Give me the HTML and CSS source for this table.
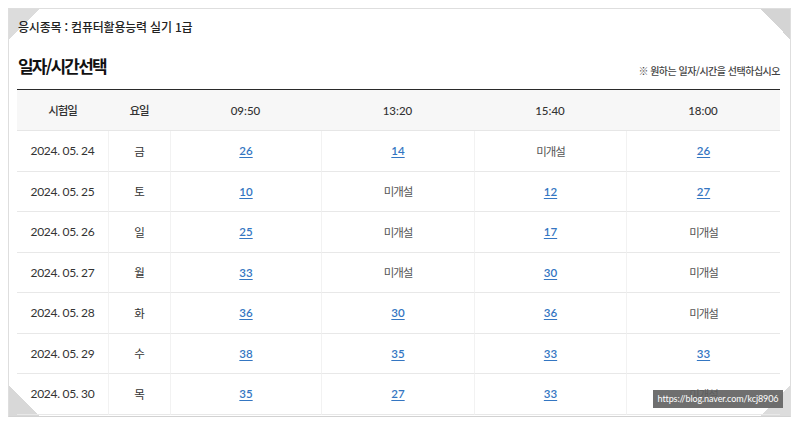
FILE: index.html
```html
<!DOCTYPE html>
<html lang="ko">
<head>
<meta charset="utf-8">
<title>일자/시간선택</title>
<link rel="stylesheet" href="styles.css">
</head>
<body>
<div class="card">
  <div class="subject">응시종목 : 컴퓨터활용능력 실기 1급</div>
  <div class="headline">
    <h2 class="title">일자/시간선택</h2>
    <p class="note">※ 원하는 일자/시간을 선택하십시오</p>
  </div>
  <table class="sched">
    <colgroup>
      <col class="c-date"><col class="c-day"><col class="c-t1"><col class="c-t2"><col class="c-t3"><col class="c-t4">
    </colgroup>
    <thead>
      <tr><th class="ko">시험일</th><th class="ko">요일</th><th>09:50</th><th>13:20</th><th>15:40</th><th>18:00</th></tr>
    </thead>
    <tbody>
      <tr><td class="date">2024. 05. 24</td><td class="ko">금</td><td><a href="#">26</a></td><td><a href="#">14</a></td><td class="none">미개설</td><td><a href="#">26</a></td></tr>
      <tr><td class="date">2024. 05. 25</td><td class="ko">토</td><td><a href="#">10</a></td><td class="none">미개설</td><td><a href="#">12</a></td><td><a href="#">27</a></td></tr>
      <tr><td class="date">2024. 05. 26</td><td class="ko">일</td><td><a href="#">25</a></td><td class="none">미개설</td><td><a href="#">17</a></td><td class="none">미개설</td></tr>
      <tr><td class="date">2024. 05. 27</td><td class="ko">월</td><td><a href="#">33</a></td><td class="none">미개설</td><td><a href="#">30</a></td><td class="none">미개설</td></tr>
      <tr><td class="date">2024. 05. 28</td><td class="ko">화</td><td><a href="#">36</a></td><td><a href="#">30</a></td><td><a href="#">36</a></td><td class="none">미개설</td></tr>
      <tr><td class="date">2024. 05. 29</td><td class="ko">수</td><td><a href="#">38</a></td><td><a href="#">35</a></td><td><a href="#">33</a></td><td><a href="#">33</a></td></tr>
      <tr><td class="date">2024. 05. 30</td><td class="ko">목</td><td><a href="#">35</a></td><td><a href="#">27</a></td><td><a href="#">33</a></td><td class="none">미개설</td></tr>
    </tbody>
  </table>
  <div class="watermark">https://blog.naver.com/kcj8906</div>
</div>
</body>
</html>
```
FILE: styles.css
```css
html, body {
  margin: 0;
  padding: 0;
  background: #ffffff;
}
body {
  font-family: "Lato", "Noto Sans CJK KR", sans-serif;
  color: #333;
}
.card {
  position: relative;
  box-sizing: border-box;
  margin: 8px 0 0 8px;
  width: 783px;
  height: 409px;
  border: 1px solid #dedede;
  border-bottom-color: #d2d2d2;
  padding: 9px 10px 0 8px;
  overflow: hidden;
  background-color: #fff;
  background-image:
    linear-gradient(135deg, #dcdcdc 50%, transparent 50%),
    linear-gradient(225deg, #d4d4d4 50%, transparent 50%),
    linear-gradient(45deg, #d8d8d8 50%, transparent 50%),
    linear-gradient(315deg, #dcdcdc 50%, transparent 50%);
  background-size: 32px 32px;
  background-repeat: no-repeat;
  background-origin: border-box;
  background-position: left top, right top, left bottom, right bottom;
}
.subject {
  font-family: "Noto Sans CJK KR", sans-serif;
  font-size: 12px;
  font-weight: 500;
  line-height: 18px;
  height: 18px;
  color: #222;
  letter-spacing: -0.2px;
  padding-left: 1px;
}
.headline {
  display: flex;
  justify-content: space-between;
  align-items: flex-end;
  margin-top: 19px;
}
.title {
  margin: 0;
  font-family: "Noto Sans CJK KR", sans-serif;
  font-size: 17px;
  font-weight: 700;
  line-height: 22px;
  letter-spacing: -1.8px;
  color: #111;
  padding-left: 1px;
}
.note {
  margin: 0;
  font-family: "Noto Sans CJK KR", sans-serif;
  font-size: 10px;
  font-weight: 500;
  line-height: 14px;
  letter-spacing: -0.5px;
  color: #444;
  margin-bottom: -1px;
}
.sched {
  margin-top: 12px;
  width: 763px;
  table-layout: fixed;
  border-collapse: separate;
  border-spacing: 0;
  border-top: 1px solid #2a2a2a;
}
.c-date { width: 91px; }
.c-day { width: 62px; }
.c-t1 { width: 151px; }
.c-t2 { width: 153px; }
.c-t3 { width: 152px; }
.c-t4 { width: 154px; }
.sched th {
  height: 40px;
  padding: 0;
  background: #f7f7f7;
  border-bottom: 1px solid #e6e6e6;
  font-size: 11.5px;
  font-weight: 500;
  color: #333;
  text-align: center;
}
.sched th.ko {
  font-family: "Noto Sans CJK KR", sans-serif;
  font-size: 11.5px;
  letter-spacing: -1px;
}
.sched td {
  height: 39.5px;
  padding: 0;
  border-bottom: 1px solid #e8e8e8;
  border-left: 1px solid #f2f2f2;
  text-align: center;
  font-size: 11.5px;
  color: #333;
}
.sched td:first-child {
  border-left: none;
}
.sched td.date {
  font-size: 12px;
  letter-spacing: -0.3px;
  color: #333;
}
.sched td.ko {
  font-family: "Noto Sans CJK KR", sans-serif;
  font-size: 11.5px;
}
.sched td.none {
  font-family: "Noto Sans CJK KR", sans-serif;
  font-size: 11.5px;
  letter-spacing: -1px;
  color: #555;
}
.sched a {
  color: #3476c2;
  font-weight: 600;
  text-decoration: underline;
  text-underline-offset: 2px;
}
.watermark {
  position: absolute;
  right: 7px;
  bottom: 8px;
  width: 130px;
  height: 18px;
  box-sizing: border-box;
  background: rgba(95, 95, 95, 0.9);
  color: #fff;
  font-family: "Lato", sans-serif;
  font-size: 9px;
  line-height: 18px;
  text-align: center;
  letter-spacing: -0.1px;
}
```
